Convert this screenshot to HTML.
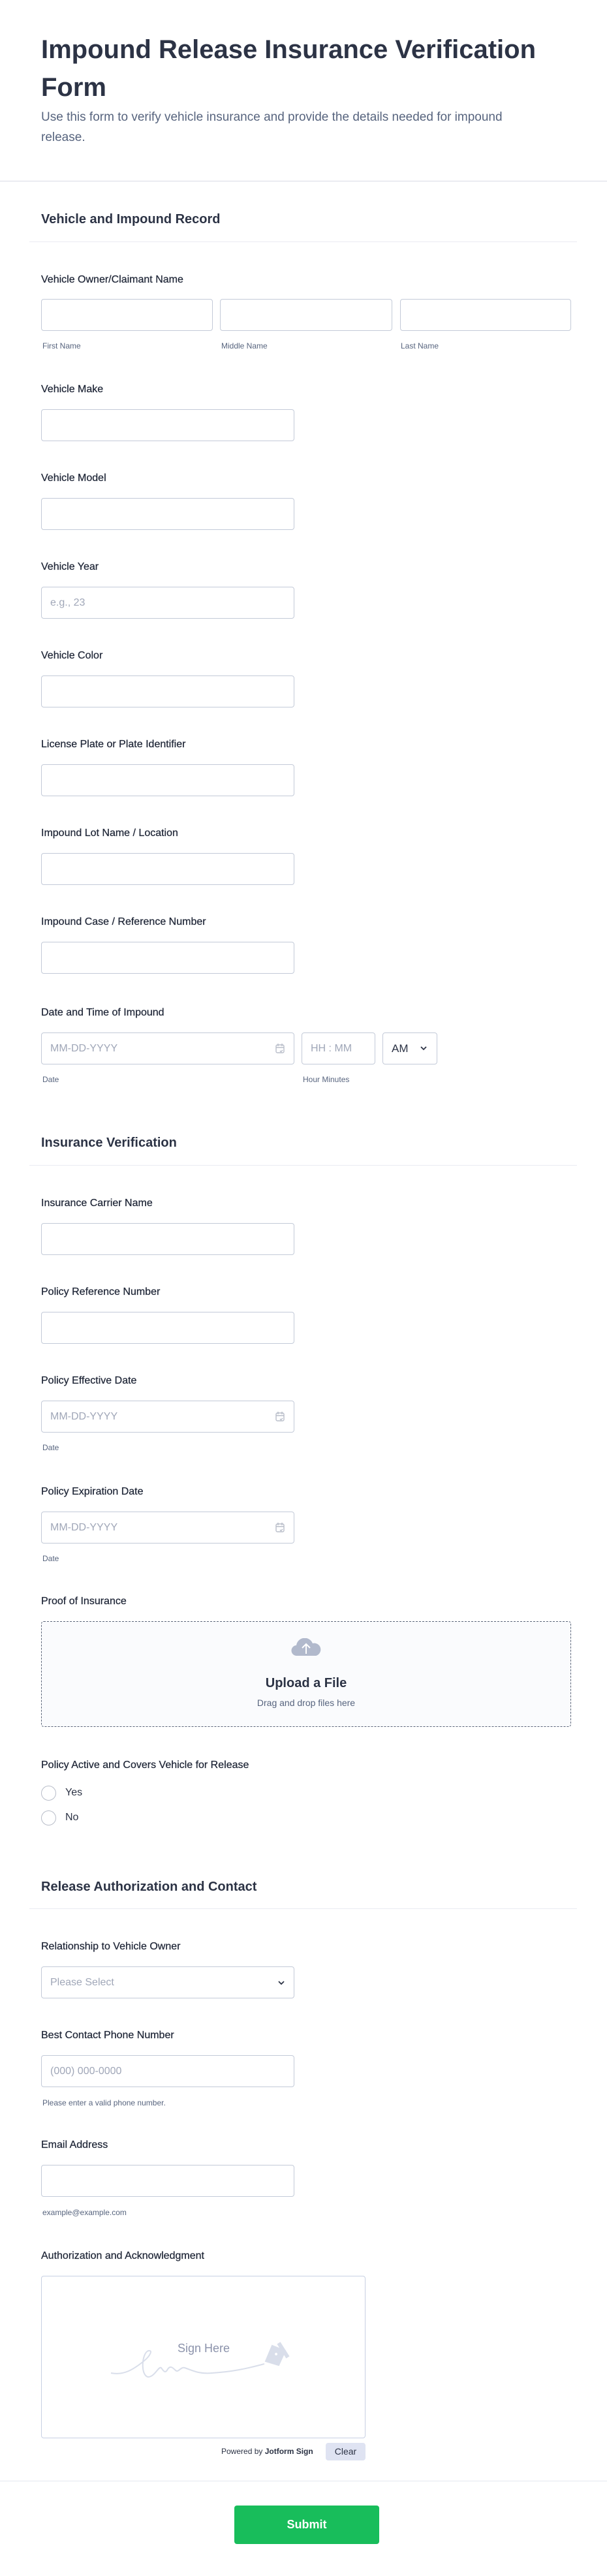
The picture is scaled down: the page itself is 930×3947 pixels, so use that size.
<!DOCTYPE html>
<html><head><meta charset="utf-8">
<style>
*{margin:0;padding:0;box-sizing:border-box}
body{width:930px;height:3947px;background:#fff;position:relative;font-family:"Liberation Sans",Arial,sans-serif;color:#2c3345;overflow:hidden}
.a{position:absolute}
.lbl{position:absolute;left:63px;font-size:16px;line-height:20px;color:#1f2637;white-space:nowrap;-webkit-text-stroke:0.25px #1f2637}
.sec{position:absolute;left:63px;font-size:20px;line-height:24px;font-weight:bold;color:#2c3345;white-space:nowrap}
.rule{position:absolute;left:45px;width:839px;height:1px;background:#eaebf2}
.inp{position:absolute;height:49px;border:1px solid #c3cad8;border-radius:4px;background:#fff;font-size:16px;color:#a0a7b8;line-height:47px;padding-left:13px;white-space:nowrap}
.sub{position:absolute;font-size:12px;line-height:14px;color:#57647e;white-space:nowrap}
.radio{position:absolute;left:63px;width:23px;height:23px;border:1px solid #b8bdc9;border-radius:50%}
.rt{position:absolute;left:100px;font-size:16px;line-height:20px;color:#2c3345}
</style></head><body>

<div class="a" style="left:63px;top:47px;font-size:40px;line-height:58px;font-weight:bold;color:#2c3345;width:850px">Impound Release Insurance Verification Form</div>
<div class="a" style="left:63px;top:164px;font-size:19px;line-height:31px;color:#57647e;width:860px;white-space:nowrap">Use this form to verify vehicle insurance and provide the details needed for impound<br>release.</div>
<div class="a" style="left:0;top:277px;width:930px;height:1px;background:#d8dbe5"></div>

<div class="sec" style="top:324px">Vehicle and Impound Record</div>
<div class="rule" style="top:370px"></div>

<div class="lbl" style="top:419px">Vehicle Owner/Claimant Name</div>
<div class="inp" style="left:63px;top:458px;width:263px"></div>
<div class="inp" style="left:337px;top:458px;width:264px"></div>
<div class="inp" style="left:613px;top:458px;width:262px"></div>
<div class="sub" style="left:65px;top:523px">First Name</div>
<div class="sub" style="left:339px;top:523px">Middle Name</div>
<div class="sub" style="left:614px;top:523px">Last Name</div>

<div class="lbl" style="top:587px">Vehicle Make</div>
<div class="inp" style="left:63px;top:627px;width:388px"></div>
<div class="lbl" style="top:723px">Vehicle Model</div>
<div class="inp" style="left:63px;top:763px;width:388px"></div>
<div class="lbl" style="top:859px">Vehicle Year</div>
<div class="inp" style="left:63px;top:899px;width:388px">e.g., 23</div>
<div class="lbl" style="top:995px">Vehicle Color</div>
<div class="inp" style="left:63px;top:1035px;width:388px"></div>
<div class="lbl" style="top:1131px">License Plate or Plate Identifier</div>
<div class="inp" style="left:63px;top:1171px;width:388px"></div>
<div class="lbl" style="top:1267px">Impound Lot Name / Location</div>
<div class="inp" style="left:63px;top:1307px;width:388px"></div>
<div class="lbl" style="top:1403px">Impound Case / Reference Number</div>
<div class="inp" style="left:63px;top:1443px;width:388px"></div>

<div class="lbl" style="top:1542px">Date and Time of Impound</div>
<div class="inp" style="left:63px;top:1582px;width:388px">MM-DD-YYYY
<svg class="a" style="left:357px;top:15px" width="16" height="17" viewBox="0 0 16 17" fill="none" stroke="#b8bdc9" stroke-width="1.4"><rect x="2" y="3" width="12" height="12" rx="2"/><path d="M2 7h12M5 1v4M11 1v4M8 12l1.5 1.5L12 11"/></svg></div>
<div class="inp" style="left:462px;top:1582px;width:113px">HH : MM</div>
<div class="inp" style="left:586px;top:1582px;width:84px;color:#2c3345;font-size:17px">AM
<svg class="a" style="left:57px;top:19px" width="10" height="8" viewBox="0 0 10 8" fill="none" stroke="#2c3345" stroke-width="1.8"><path d="M1 2l4 4 4-4"/></svg></div>
<div class="sub" style="left:65px;top:1647px">Date</div>
<div class="sub" style="left:464px;top:1647px">Hour Minutes</div>

<div class="sec" style="top:1739px">Insurance Verification</div>
<div class="rule" style="top:1785px"></div>

<div class="lbl" style="top:1834px">Insurance Carrier Name</div>
<div class="inp" style="left:63px;top:1874px;width:388px"></div>
<div class="lbl" style="top:1970px">Policy Reference Number</div>
<div class="inp" style="left:63px;top:2010px;width:388px"></div>
<div class="lbl" style="top:2106px">Policy Effective Date</div>
<div class="inp" style="left:63px;top:2146px;width:388px">MM-DD-YYYY
<svg class="a" style="left:357px;top:15px" width="16" height="17" viewBox="0 0 16 17" fill="none" stroke="#b8bdc9" stroke-width="1.4"><rect x="2" y="3" width="12" height="12" rx="2"/><path d="M2 7h12M5 1v4M11 1v4M8 12l1.5 1.5L12 11"/></svg></div>
<div class="sub" style="left:65px;top:2211px">Date</div>
<div class="lbl" style="top:2276px">Policy Expiration Date</div>
<div class="inp" style="left:63px;top:2316px;width:388px">MM-DD-YYYY
<svg class="a" style="left:357px;top:15px" width="16" height="17" viewBox="0 0 16 17" fill="none" stroke="#b8bdc9" stroke-width="1.4"><rect x="2" y="3" width="12" height="12" rx="2"/><path d="M2 7h12M5 1v4M11 1v4M8 12l1.5 1.5L12 11"/></svg></div>
<div class="sub" style="left:65px;top:2381px">Date</div>

<div class="lbl" style="top:2444px">Proof of Insurance</div>
<div class="a" style="left:63px;top:2484px;width:812px;height:162px;border:1.5px dashed #5a6478;border-radius:4px;background:#fafbfd"></div>
<svg class="a" style="left:445px;top:2510px" width="48" height="28" viewBox="0 0 48 28"><path d="M10 27a8 8 0 0 1-1-16A13 13 0 0 1 34 8a9 9 0 0 1 5 19z" fill="#b1b9cc"/><path d="M24 24V10M18 15l6-6 6 6" stroke="#fff" stroke-width="2" fill="none"/></svg>
<div class="a" style="left:63px;top:2567px;width:812px;text-align:center;font-size:20px;line-height:24px;font-weight:bold;color:#2c3345">Upload a File</div>
<div class="a" style="left:63px;top:2600px;width:812px;text-align:center;font-size:14px;line-height:18px;color:#57647e">Drag and drop files here</div>

<div class="lbl" style="top:2695px">Policy Active and Covers Vehicle for Release</div>
<div class="radio" style="top:2736px"></div><div class="rt" style="top:2737px">Yes</div>
<div class="radio" style="top:2774px"></div><div class="rt" style="top:2775px">No</div>

<div class="sec" style="top:2879px">Release Authorization and Contact</div>
<div class="rule" style="top:2924px"></div>

<div class="lbl" style="top:2973px">Relationship to Vehicle Owner</div>
<div class="inp" style="left:63px;top:3013px;width:388px">Please Select
<svg class="a" style="left:362px;top:20px" width="10" height="8" viewBox="0 0 10 8" fill="none" stroke="#2c3345" stroke-width="1.8"><path d="M1 2l4 4 4-4"/></svg></div>
<div class="lbl" style="top:3109px">Best Contact Phone Number</div>
<div class="inp" style="left:63px;top:3149px;width:388px">(000) 000-0000</div>
<div class="sub" style="left:65px;top:3215px">Please enter a valid phone number.</div>
<div class="lbl" style="top:3277px">Email Address</div>
<div class="inp" style="left:63px;top:3317px;width:388px"></div>
<div class="sub" style="left:65px;top:3383px">example@example.com</div>

<div class="lbl" style="top:3447px">Authorization and Acknowledgment</div>
<div class="a" style="left:63px;top:3487px;width:497px;height:249px;border:1px solid #c7d0e3;border-radius:4px"></div>
<div class="a" style="left:262px;top:3587px;width:100px;text-align:center;font-size:18px;line-height:22px;color:#8c93ab">Sign Here</div>
<svg class="a" style="left:165px;top:3580px" width="290" height="65" viewBox="0 0 290 65" fill="none" stroke="#d9deea" stroke-width="2"><path d="M5 56C25 60 40 50 55 38C65 30 70 20 62 22C52 26 50 60 62 62C72 62 78 45 82 48C85 52 88 58 92 50C96 44 100 48 104 52C108 56 112 46 118 48C130 52 140 58 160 56C190 54 210 50 240 42"/><path d="M242 38L252 14L272 22L262 44z M258 24a3 3 0 1 0 .1 0" fill="#d9deea"/><path d="M262 10l14 22" stroke-width="6"/></svg>
<div class="a" style="left:339px;top:3749px;font-size:12px;line-height:14px;color:#2c3345;white-space:nowrap">Powered by <b>Jotform Sign</b></div>
<div class="a" style="left:499px;top:3743px;width:61px;height:27px;background:#dfe3f2;border-radius:4px;text-align:center;font-size:14px;line-height:27px;color:#2c3345">Clear</div>

<div class="a" style="left:0;top:3801px;width:930px;height:1px;background:#e4e8f0"></div>
<div class="a" style="left:359px;top:3839px;width:222px;height:59px;background:#18bd5b;border-radius:4px;text-align:center;color:#fff;font-size:18px;line-height:59px;font-weight:bold">Submit</div>
</body></html>
